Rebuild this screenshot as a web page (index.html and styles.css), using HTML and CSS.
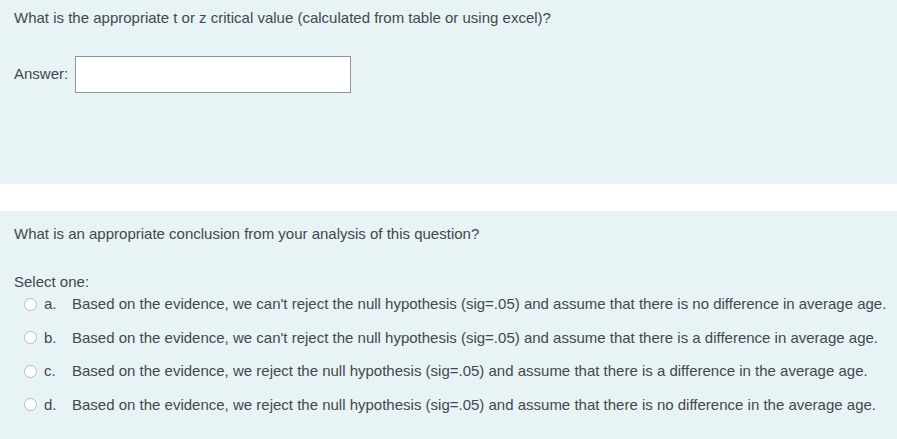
FILE: index.html
```html
<!DOCTYPE html>
<html>
<head>
<meta charset="utf-8">
<link rel="stylesheet" href="styles.css">
</head>
<body>
<div class="panel panel-one">
  <div class="qtext">What is the appropriate t or z critical value (calculated from table or using excel)?</div>
  <div class="answer-row">
    <label class="answer-label">Answer:</label>
    <input class="answer-input" type="text">
  </div>
</div>
<div class="spacer"></div>
<div class="panel panel-two">
  <div class="qtext">What is an appropriate conclusion from your analysis of this question?</div>
  <div class="prompt">Select one:</div>
  <div class="options">
    <div class="option"><span class="radio"></span><span class="letter">a.</span><span class="opt-text">Based on the evidence, we can't reject the null hypothesis (sig=.05) and assume that there is no difference in average age.</span></div>
    <div class="option"><span class="radio"></span><span class="letter">b.</span><span class="opt-text">Based on the evidence, we can't reject the null hypothesis (sig=.05) and assume that there is a difference in average age.</span></div>
    <div class="option"><span class="radio"></span><span class="letter">c.</span><span class="opt-text">Based on the evidence, we reject the null hypothesis (sig=.05) and assume that there is a difference in the average age.</span></div>
    <div class="option"><span class="radio"></span><span class="letter">d.</span><span class="opt-text">Based on the evidence, we reject the null hypothesis (sig=.05) and assume that there is no difference in the average age.</span></div>
  </div>
</div>
</body>
</html>
```
FILE: styles.css
```css
html, body {
  margin: 0;
  padding: 0;
  background: #ffffff;
}
body {
  font-family: "Liberation Sans", Arial, sans-serif;
  font-size: 15px;
  line-height: 22.5px;
  color: #44484c;
  width: 897px;
  height: 439px;
  overflow: hidden;
}
.panel {
  background: #e7f3f5;
  padding: 0 0 0 14px;
}
.panel-one {
  height: 184px;
  padding-top: 7px;
  box-sizing: border-box;
}
.spacer {
  height: 27px;
}
.panel-two {
  height: 228px;
  padding-top: 12px;
  box-sizing: border-box;
}
.answer-row {
  display: flex;
  align-items: center;
  gap: 7px;
  margin-top: 26px;
}
.answer-input {
  width: 276px;
  height: 37px;
  box-sizing: border-box;
  border: 1px solid #8f959e;
  background: #fff;
  margin: 0;
  padding: 0;
}
.prompt {
  margin-top: 25px;
}
.options {
  display: flex;
  flex-direction: column;
  gap: 11px;
}
.option {
  display: flex;
  align-items: center;
  padding-left: 10px;
}
.radio {
  width: 13px;
  height: 13px;
  box-sizing: border-box;
  border: 1px solid #b9bcbf;
  border-radius: 50%;
  background: #fff;
  flex: none;
}
.letter {
  flex: none;
  margin-left: 7px;
  width: 28px;
}
.opt-text {
  flex: none;
  white-space: nowrap;
}
```
